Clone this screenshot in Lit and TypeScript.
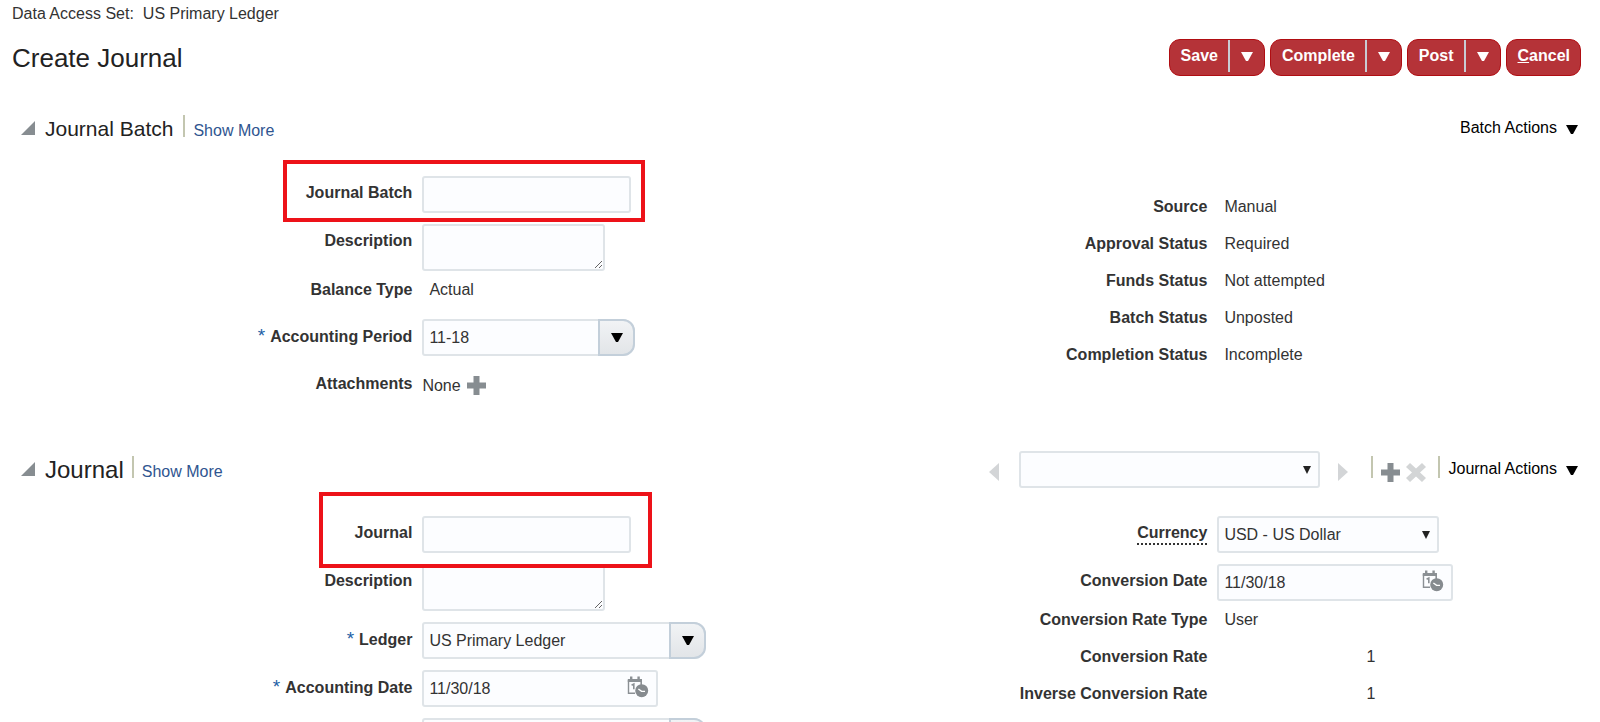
import { LitElement, html, css, svg, nothing, TemplateResult } from "lit";
import { customElement } from "lit/decorators.js";
import { classMap } from "lit/directives/class-map.js";

const down = (w = 12, h = 8) => html`
  <svg class="glyph" width=${w} height=${h} viewBox="0 0 12 8" preserveAspectRatio="none" aria-hidden="true">
    <path d="M0 0H12L7 8H5Z" fill="currentColor" />
  </svg>`;

const sharpDown = (w: number, h: number) => html`
  <svg class="glyph" width=${w} height=${h} viewBox="0 0 10 8" preserveAspectRatio="none" aria-hidden="true">
    <path d="M0 0H10L5 8Z" fill="currentColor" />
  </svg>`;

const plus = html`
  <svg class="glyph" width="19" height="19" viewBox="0 0 19 19" aria-hidden="true">
    <path d="M6.5 0H12.5V6.5H19V12.5H12.5V19H6.5V12.5H0V6.5H6.5Z" fill="#878d91" />
  </svg>`;

const cross = html`
  <svg class="glyph" width="20" height="19" viewBox="0 0 20 19" aria-hidden="true">
    <path d="M4 0L10 5.6L16 0L20 4L14 9.5L20 15L16 19L10 13.4L4 19L0 15L6 9.5L0 4Z" fill="#d3d5d6" />
  </svg>`;

const side = (d: string) => html`
  <svg class="glyph" width="10" height="18" viewBox="0 0 10 18" aria-hidden="true">
    <path d=${d} fill="#d3d5d7" />
  </svg>`;

const calendar = html`
  <svg class="glyph" width="22" height="22" viewBox="0 0 22 22" aria-hidden="true">
    ${svg`
      <path d="M1.5 4V17.2H8" fill="none" stroke="#8b9094" stroke-width="1.4" />
      <path d="M0.8 3H15V9H13.4V6H0.8Z" fill="#8b9094" />
      <path d="M3 0.5H5.4V4H3ZM10.4 0.5H12.8V4H10.4Z" fill="#8b9094" />
      <path d="M4.6 9.2L6.8 8V13.2" fill="none" stroke="#8b9094" stroke-width="1.6" />
      <circle cx="14.7" cy="14.7" r="6.5" fill="#868b8f" />
      <path d="M11.4 13L14.6 15.4H18" fill="none" stroke="#fff" stroke-width="1.4" />`}
  </svg>`;

@customElement("app-root")
export class AppRoot extends LitElement {
  static styles = css`
    :host {
      display: block;
      height: 100vh;
      overflow: hidden;
      background: #fff;
      color: #333;
      font: 16px/16px "Liberation Sans", Arial, sans-serif;
    }
    * { box-sizing: border-box; }
    button, input, textarea, select { font: inherit; color: inherit; margin: 0; }
    button { background: none; border: 0; padding: 0; cursor: pointer; }
    h1, h2 { margin: 0; font-weight: normal; color: #222; }
    .glyph { display: block; flex: none; }

    .access { display: flex; gap: 9px; padding: 6px 12px 4px; }
    .title-bar {
      display: flex;
      align-items: center;
      justify-content: space-between;
      margin-top: 13px;
      padding: 0 19px 0 12px;
    }
    h1 { font-size: 26px; line-height: 36px; }
    .buttons { display: flex; gap: 5px; }
    .action {
      display: flex;
      height: 37px;
      border: 1px solid #b00d12;
      border-radius: 11px;
      background: #b53338;
      color: #fff;
      font-weight: bold;
      overflow: hidden;
    }
    .action .main { padding: 0 10px 4px 11px; }
    .action .split {
      display: flex;
      align-items: center;
      justify-content: center;
      width: 36px;
      height: 32px;
      border-left: 2px solid #c9ccd4;
    }
    .action .split.off { display: none; }

    .section-head {
      display: flex;
      align-items: center;
      justify-content: space-between;
      min-height: 37px;
      padding: 0 22px 0 21px;
    }
    .batch .section-head { margin-top: 34px; }
    .journal .section-head { margin-top: 47px; }
    .name { display: flex; align-items: center; }
    .name .glyph { margin-bottom: 2px; }
    .name h2 { margin: 0 10px; line-height: 28px; }
    .batch h2 { font-size: 21px; }
    .journal h2 { font-size: 24px; }
    .journal .name h2 { margin-right: 8px; }
    .link { color: #2f5590; text-decoration: none; padding-top: 4px; }
    .rule { width: 2px; height: 22px; margin: 0 8px 6px 0; background: #c3c6b0; }
    .tools { display: flex; align-items: center; }
    .menu { display: flex; align-items: center; gap: 9px; color: #000; padding-bottom: 2px; }
    .menu .glyph { margin-top: 4px; }
    .tools .step { padding: 4px 20px 0; }
    .tools .chooser + .step { padding: 4px 23px 0 18px; }
    .tools .icons { display: flex; gap: 6px; padding: 6px 12px 0 0; }

    .body { display: grid; grid-template-columns: 1fr 1fr; padding: 28px 10px 0 0; }
    .batch .body { padding-top: 29px; }
    .col { display: flex; flex-direction: column; gap: 11px; }
    .col.status { padding-top: 23px; }
    .row {
      position: relative;
      display: grid;
      grid-template-columns: 52% 1fr;
      column-gap: 9px;
      align-items: start;
    }
    .row.plain { min-height: 26px; }
    .row.field { min-height: 37px; }
    .label { font-weight: bold; justify-self: end; padding-right: 1px; }
    .field .label { padding-top: 9px; }
    .star { color: #1d5fa6; font-weight: normal; font-size: 19px; margin-right: 5px; }
    .hint { border-bottom: 2px dotted #333; padding-bottom: 2px; }
    .value { padding-left: 7px; }
    .value.number { width: 158px; text-align: right; }
    .attach { display: flex; gap: 6px; align-items: center; padding-top: 9px; }

    .box {
      display: flex;
      position: relative;
      height: 37px;
      border: 2px solid #dfe4e8;
      border-radius: 3px;
      background: #fcfdff;
    }
    .text { width: 209px; }
    .date { width: 236px; align-items: center; padding-right: 7px; }
    .date button { margin-bottom: 3px; }
    .pick { width: 222px; }
    .chooser { width: 301px; }
    .combo { border-radius: 3px 12px 12px 3px; }
    .short { width: 213px; }
    .long { width: 284px; }
    .box input, .box select {
      flex: 1;
      min-width: 0;
      height: 100%;
      padding: 0 5px;
      border: 0;
      outline: 0;
      background: transparent;
      appearance: none;
    }
    .box select + .glyph { position: absolute; right: 7px; top: 13px; color: #222; pointer-events: none; }
    .drop {
      display: flex;
      align-items: center;
      justify-content: center;
      width: 37px;
      height: 37px;
      margin: -2px;
      border: 2px solid #c3cfda;
      border-radius: 0 12px 12px 0;
      background: linear-gradient(#f1f3f5, #e2e5e8);
      color: #000;
    }
    textarea {
      display: block;
      width: 183px;
      height: 47px;
      padding: 4px 6px;
      border: 2px solid #dfe4e8;
      border-radius: 3px;
      background: #fcfdff;
    }
    .mark {
      position: absolute;
      z-index: 1;
      border: 4px solid #ed1219;
      pointer-events: none;
    }
    .mark-batch { left: calc(52% - 130px); top: -16px; width: 362px; height: 62px; }
    .mark-journal { left: calc(52% - 94px); top: -24px; width: 333px; height: 76px; }
  `;

  private action(text: string | TemplateResult, menu = "") {
    return html`<div class="action">
      <button class="main">${text}</button>
      <button class=${classMap({ split: true, off: !menu })} aria-label=${menu}>${down(12, 9)}</button>
    </div>`;
  }

  private field(id: string, label: string, control: TemplateResult, required = false, extra: unknown = nothing) {
    return html`<div class="row field">
      <label class="label" for=${id}>${required ? html`<span class="star">*</span>` : nothing}${label}</label>
      ${control}${extra}
    </div>`;
  }

  private plain(label: string, value: string, number = false) {
    return html`<div class="row plain">
      <span class="label">${label}</span>
      <span class=${classMap({ value: true, number })}>${value}</span>
    </div>`;
  }

  private text(id: string) {
    return html`<div class="box text"><input id=${id} type="text" /></div>`;
  }

  private combo(id: string, value: string, size: string) {
    return html`<div class="box combo ${size}">
      <input id=${id} type="text" .value=${value} />
      <button class="drop" aria-label="Search">${down(12, 9)}</button>
    </div>`;
  }

  private date(id: string, value: string) {
    return html`<div class="box date">
      <input id=${id} type="text" .value=${value} />
      <button aria-label="Select date">${calendar}</button>
    </div>`;
  }

  private heading(title: string) {
    return html`<div class="name">
      <svg class="glyph" width="14" height="14" viewBox="0 0 14 14" aria-hidden="true">
        <path d="M14 0V14H0Z" fill="#878d91" />
      </svg>
      <h2>${title}</h2>
      <span class="rule"></span>
      <a class="link" href="#">Show More</a>
    </div>`;
  }

  render() {
    return html`
      <div class="access"><span>Data Access Set:</span><span>US Primary Ledger</span></div>
      <header class="title-bar">
        <h1>Create Journal</h1>
        <div class="buttons">
          ${this.action("Save", "Save options")}
          ${this.action("Complete", "Complete options")}
          ${this.action("Post", "Post options")}
          ${this.action(html`<u>C</u>ancel`)}
        </div>
      </header>

      <section class="batch">
        <div class="section-head">
          ${this.heading("Journal Batch")}
          <button class="menu">Batch Actions ${down(12, 9)}</button>
        </div>
        <div class="body">
          <div class="col">
            ${this.field("batch", "Journal Batch", this.text("batch"), false, html`<span class="mark mark-batch"></span>`)}
            ${this.field("batch-desc", "Description", html`<textarea id="batch-desc"></textarea>`)}
            ${this.plain("Balance Type", "Actual")}
            ${this.field("period", "Accounting Period", this.combo("period", "11-18", "short"), true)}
            ${this.field("attach", "Attachments", html`<div class="attach">None<button id="attach" aria-label="Add attachment">${plus}</button></div>`)}
          </div>
          <div class="col status">
            ${this.plain("Source", "Manual")}
            ${this.plain("Approval Status", "Required")}
            ${this.plain("Funds Status", "Not attempted")}
            ${this.plain("Batch Status", "Unposted")}
            ${this.plain("Completion Status", "Incomplete")}
          </div>
        </div>
      </section>

      <section class="journal">
        <div class="section-head">
          ${this.heading("Journal")}
          <div class="tools">
            <button class="step" aria-label="Previous journal">${side("M10 0V18L0 9Z")}</button>
            <div class="box chooser">
              <select aria-label="Journal line"><option></option></select>${sharpDown(8, 8)}
            </div>
            <button class="step" aria-label="Next journal">${side("M0 0V18L10 9Z")}</button>
            <span class="rule"></span>
            <div class="icons">
              <button aria-label="Add journal">${plus}</button>
              <button aria-label="Delete journal">${cross}</button>
            </div>
            <span class="rule"></span>
            <button class="menu">Journal Actions ${down(12, 9)}</button>
          </div>
        </div>
        <div class="body">
          <div class="col">
            ${this.field("journal", "Journal", this.text("journal"), false, html`<span class="mark mark-journal"></span>`)}
            ${this.field("journal-desc", "Description", html`<textarea id="journal-desc"></textarea>`)}
            ${this.field("ledger", "Ledger", this.combo("ledger", "US Primary Ledger", "long"), true)}
            ${this.field("acc-date", "Accounting Date", this.date("acc-date", "11/30/18"), true)}
            <div class="row field"><span></span>${this.combo("category", "", "long")}</div>
          </div>
          <div class="col">
            <div class="row field">
              <label class="label" for="currency"><span class="hint">Currency</span></label>
              <div class="box pick">
                <select id="currency"><option>USD - US Dollar</option></select>${sharpDown(8, 8)}
              </div>
            </div>
            ${this.field("conv-date", "Conversion Date", this.date("conv-date", "11/30/18"))}
            ${this.plain("Conversion Rate Type", "User")}
            ${this.plain("Conversion Rate", "1", true)}
            ${this.plain("Inverse Conversion Rate", "1", true)}
          </div>
        </div>
      </section>
    `;
  }
}
